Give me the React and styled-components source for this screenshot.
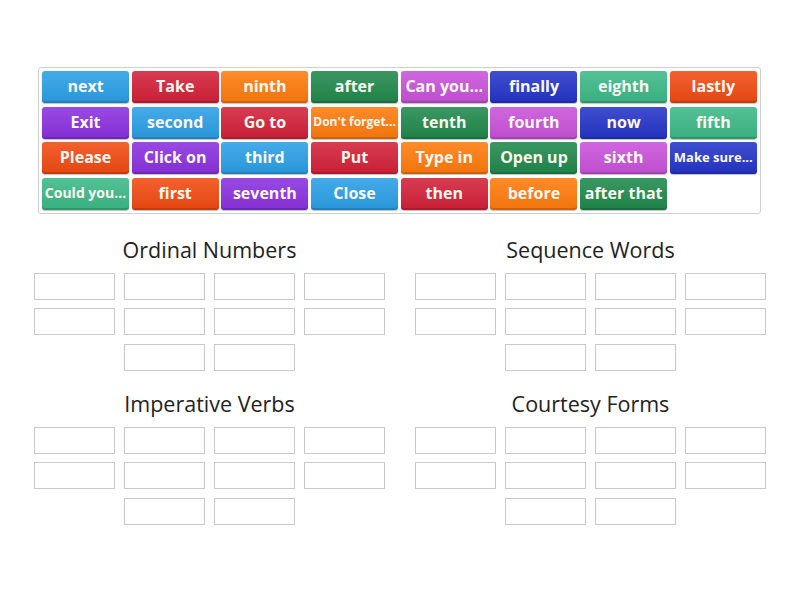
import React from "react";
import styled, { createGlobalStyle } from "styled-components";

const GlobalStyle = createGlobalStyle`
  body {
    margin: 0;
    background: #ffffff;
    font-family: "Open Sans", "Liberation Sans", sans-serif;
  }
`;

const colors = {
  blue: "#2b9fe6",
  red: "#d32139",
  orange: "#ff7b0c",
  green: "#20894c",
  magenta: "#c952da",
  navy: "#2535c9",
  mint: "#3cb987",
  flame: "#f14b12",
  violet: "#8b31df",
};

const tiles = [
  ["next", "blue"], ["Take", "red"], ["ninth", "orange"], ["after", "green"],
  ["Can you...", "magenta"], ["finally", "navy"], ["eighth", "mint"], ["lastly", "flame"],
  ["Exit", "violet"], ["second", "blue"], ["Go to", "red"], ["Don't forget...", "orange", 12],
  ["tenth", "green"], ["fourth", "magenta"], ["now", "navy"], ["fifth", "mint"],
  ["Please", "flame"], ["Click on", "violet"], ["third", "blue"], ["Put", "red"],
  ["Type in", "orange"], ["Open up", "green"], ["sixth", "magenta"], ["Make sure...", "navy", 13],
  ["Could you...", "mint", 14], ["first", "flame"], ["seventh", "violet"], ["Close", "blue"],
  ["then", "red"], ["before", "orange"], ["after that", "green"],
];

const groups = ["Ordinal Numbers", "Sequence Words", "Imperative Verbs", "Courtesy Forms"];

const Page = styled.div`
  padding: 67px 0 0 34px;
  width: 732px;
`;

const TileBank = styled.div`
  margin-left: 4px;
  width: 716px;
  display: grid;
  grid-template-columns: repeat(8, 87px);
  grid-auto-rows: 32px;
  column-gap: 2.7px;
  row-gap: 3.6px;
  padding: 3px 2px 3px 3px;
  border: 1px solid #cfcfcf;
  border-radius: 3px;
`;

const Tile = styled.div`
  display: flex;
  align-items: center;
  justify-content: center;
  border-radius: 3px;
  background: linear-gradient(rgba(255, 255, 255, 0.12), rgba(0, 0, 0, 0.06)), ${(p) => p.$bg};
  box-shadow: inset 0 -2px 0 rgba(0, 0, 0, 0.15), 0 1px 1px rgba(0, 0, 0, 0.25);
  color: #fbf8f2;
  font-weight: 700;
  font-size: ${(p) => p.$size || 16}px;
  white-space: nowrap;
  overflow: hidden;
  padding-bottom: 2px;
`;

const Groups = styled.div`
  margin-top: 22px;
  display: grid;
  grid-template-columns: 351px 351px;
  column-gap: 30px;
  row-gap: 19px;
`;

const Group = styled.div`
  display: flex;
  flex-direction: column;
`;

const GroupTitle = styled.div`
  text-align: center;
  font-size: 21.5px;
  line-height: 27px;
  color: #222;
  margin-bottom: 10px;
`;

const Slots = styled.div`
  display: grid;
  grid-template-columns: repeat(4, 81px);
  grid-auto-rows: 27px;
  column-gap: 9px;
  row-gap: 8.5px;
`;

const Slot = styled.div`
  border: 1px solid #c9c9c9;
  background: #fff;
  grid-column: ${(p) => p.$col || "auto"};
`;

export default function App() {
  return (
    <Page>
      <GlobalStyle />
      <TileBank>
        {tiles.map(([label, color, size]) => (
          <Tile key={label} $bg={colors[color]} $size={size}>
            {label}
          </Tile>
        ))}
      </TileBank>
      <Groups>
        {groups.map((title) => (
          <Group key={title}>
            <GroupTitle>{title}</GroupTitle>
            <Slots>
              {Array.from({ length: 8 }).map((_, i) => (
                <Slot key={i} />
              ))}
              <Slot $col={2} />
              <Slot $col={3} />
            </Slots>
          </Group>
        ))}
      </Groups>
    </Page>
  );
}
